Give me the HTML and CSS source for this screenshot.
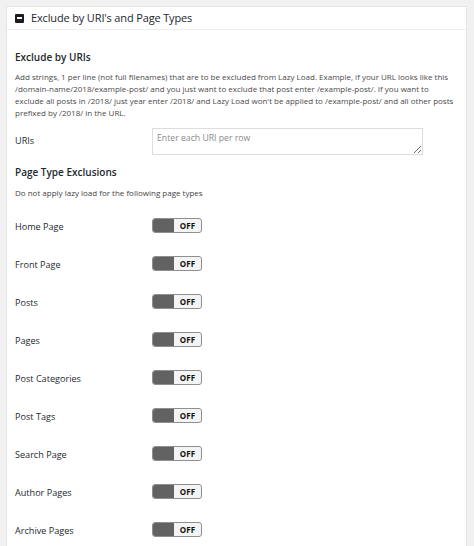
FILE: index.html
```html
<!DOCTYPE html>
<html>
<head>
<meta charset="utf-8">
<link rel="stylesheet" href="styles.css">
</head>
<body>
<div class="card">
  <div class="card-header">
    <span class="toggle-icon"><span class="minus"></span></span>
    <h2 class="card-title">Exclude by URI's and Page Types</h2>
  </div>
  <div class="card-body">
    <h3 class="section-title first">Exclude by URIs</h3>
    <p class="desc">Add strings, 1 per line (not full filenames) that are to be excluded from Lazy Load. Example, if your URL looks like this<br>/domain-name/2018/example-post/ and you just want to exclude that post enter /example-post/. If you want to<br>exclude all posts in /2018/ just year enter /2018/ and Lazy Load won't be applied to /example-post/ and all other posts<br>prefixed by /2018/ in the URL.</p>
    <div class="field-row">
      <label class="field-label">URIs</label>
      <textarea class="uri-input" placeholder="Enter each URI per row"></textarea>
    </div>
    <h3 class="section-title">Page Type Exclusions</h3>
    <p class="small-desc">Do not apply lazy load for the following page types</p>
    <div class="toggle-list">
      <div class="toggle-row"><span class="row-label">Home Page</span><span class="switch"><span class="switch-off"></span><span class="switch-text">OFF</span></span></div>
      <div class="toggle-row"><span class="row-label">Front Page</span><span class="switch"><span class="switch-off"></span><span class="switch-text">OFF</span></span></div>
      <div class="toggle-row"><span class="row-label">Posts</span><span class="switch"><span class="switch-off"></span><span class="switch-text">OFF</span></span></div>
      <div class="toggle-row"><span class="row-label">Pages</span><span class="switch"><span class="switch-off"></span><span class="switch-text">OFF</span></span></div>
      <div class="toggle-row"><span class="row-label">Post Categories</span><span class="switch"><span class="switch-off"></span><span class="switch-text">OFF</span></span></div>
      <div class="toggle-row"><span class="row-label">Post Tags</span><span class="switch"><span class="switch-off"></span><span class="switch-text">OFF</span></span></div>
      <div class="toggle-row"><span class="row-label">Search Page</span><span class="switch"><span class="switch-off"></span><span class="switch-text">OFF</span></span></div>
      <div class="toggle-row"><span class="row-label">Author Pages</span><span class="switch"><span class="switch-off"></span><span class="switch-text">OFF</span></span></div>
      <div class="toggle-row"><span class="row-label">Archive Pages</span><span class="switch"><span class="switch-off"></span><span class="switch-text">OFF</span></span></div>
    </div>
  </div>
</div>
</body>
</html>
```
FILE: styles.css
```css
html, body {
  margin: 0;
  padding: 0;
  background: #f1f1f1;
  font-family: "Open Sans", "Noto Sans", sans-serif;
  color: #444;
}
.card {
  margin: 6px 7px 0 6px;
  background: #fff;
  border: 1px solid #e5e5e5;
  height: 560px;
}
.card-header {
  height: 22px;
  border-bottom: 1px solid #eee;
  display: flex;
  align-items: center;
  padding-left: 8px;
  gap: 7px;
}
.toggle-icon {
  width: 9px;
  height: 9px;
  background: #1d1d1d;
  border-radius: 1px;
  display: flex;
  align-items: center;
  justify-content: center;
}
.minus {
  width: 5px;
  height: 2px;
  background: #fff;
}
.card-title {
  margin: 0;
  font-size: 11px;
  letter-spacing: -0.15px;
  font-weight: 400;
  color: #23282d;
  line-height: 16px;
}
.card-body {
  padding: 0 8px;
}
.section-title {
  margin: 10px 0 0;
  font-size: 10px;
  line-height: 14px;
  font-weight: 600;
  color: #23282d;
}
.section-title.first {
  margin-top: 20px;
}
.desc {
  margin: 7px 0 0;
  font-size: 8px;
  line-height: 12px;
  color: #4a4a4a;
  white-space: nowrap;
}
.field-row {
  display: grid;
  grid-template-columns: 137px 271px;
  align-items: center;
  margin-top: 9px;
}
.field-label, .row-label {
  font-size: 9.1px;
  color: #23282d;
  font-weight: 400;
  line-height: 12px;
}
.field-label {
  padding-bottom: 2px;
}
.uri-input {
  width: 271px;
  height: 27px;
  box-sizing: border-box;
  border: 1px solid #ddd;
  padding: 3px 4px;
  margin: 0;
  font-family: "Open Sans", "Noto Sans", sans-serif;
  font-size: 8.7px;
  color: #555;
  resize: vertical;
  display: block;
}
.uri-input::placeholder {
  color: #8a8a8a;
}
.small-desc {
  margin: 9px 0 0;
  font-size: 8px;
  line-height: 10px;
  color: #444;
}
.toggle-list {
  margin-top: 19px;
  display: flex;
  flex-direction: column;
  gap: 23px;
}
.toggle-row {
  display: grid;
  grid-template-columns: 137px 50px;
  align-items: center;
  height: 15px;
}
.row-label {
  padding-top: 4px;
}
.switch {
  width: 50px;
  height: 15px;
  box-sizing: border-box;
  border: 1px solid #8f8f8f;
  border-radius: 3px;
  background: #f4f4f4;
  display: flex;
  overflow: hidden;
}
.switch-off {
  width: 21px;
  background: #626262;
}
.switch-text {
  flex: 1;
  display: flex;
  align-items: center;
  justify-content: center;
  font-size: 8px;
  font-weight: 700;
  color: #111;
  letter-spacing: 0.2px;
}
```
